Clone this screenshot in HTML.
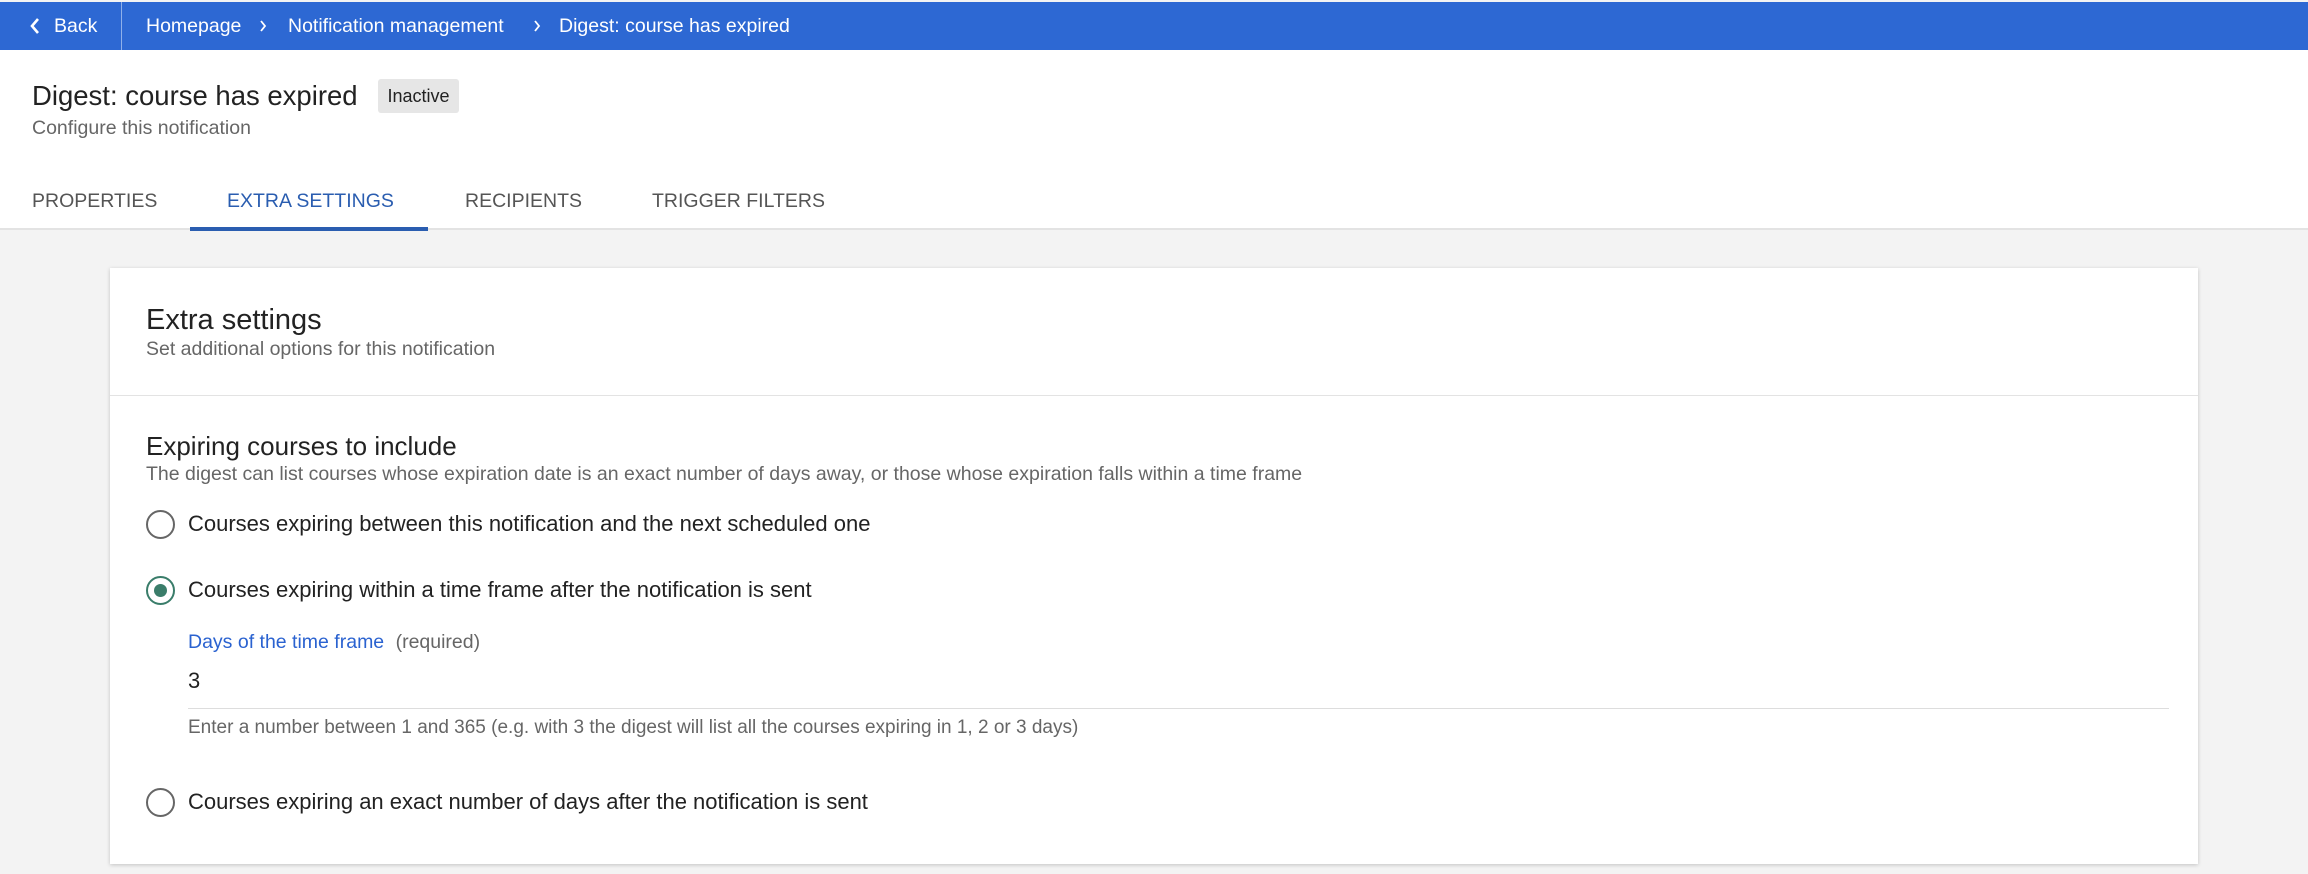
<!DOCTYPE html>
<html><head><meta charset="utf-8"><style>
*{margin:0;padding:0;box-sizing:border-box}
body{width:2308px;height:874px;background:#f3f3f3;font-family:"Liberation Sans",sans-serif;position:relative;overflow:hidden;color:#222}
.abs{position:absolute;white-space:nowrap;line-height:30px}
#bar{position:absolute;left:0;top:2px;width:2308px;height:48px;background:#2d68d3;color:#fff;font-size:19.5px}
#head{position:absolute;left:0;top:50px;width:2308px;height:180px;background:#fff;border-bottom:2px solid #e3e3e3}
.tab{position:absolute;top:186px;font-size:19.5px;color:#555;line-height:30px;white-space:nowrap}
#card{position:absolute;left:110px;top:268px;width:2088px;height:596px;background:#fff;box-shadow:0 1px 4px rgba(0,0,0,.2)}
.radio{position:absolute;width:29px;height:29px;border:2.5px solid #666;border-radius:50%}
.lbl{font-size:22px;color:#222}
</style></head><body>
<div id="bar">
 <svg class="abs" style="left:29px;top:15px" width="12" height="18" viewBox="0 0 12 18"><path d="M9 2 L3 9 L9 16" stroke="#fff" stroke-width="2.6" fill="none"/></svg>
 <div class="abs" style="left:54px;top:9px">Back</div>
 <div class="abs" style="left:121px;top:0;width:1px;height:48px;background:#8fb0ea"></div>
 <div class="abs" style="left:146px;top:9px">Homepage</div>
 <svg class="abs" style="left:259px;top:18px" width="8" height="12" viewBox="0 0 8 12"><path d="M2 1 L6 6 L2 11" stroke="#fff" stroke-width="1.8" fill="none"/></svg>
 <div class="abs" style="left:288px;top:9px">Notification management</div>
 <svg class="abs" style="left:533px;top:18px" width="8" height="12" viewBox="0 0 8 12"><path d="M2 1 L6 6 L2 11" stroke="#fff" stroke-width="1.8" fill="none"/></svg>
 <div class="abs" style="left:559px;top:9px">Digest: course has expired</div>
</div>
<div id="head"></div>
<div class="abs" style="left:32px;top:79px;font-size:27.5px;line-height:34px;color:#222">Digest: course has expired</div>
<div class="abs" style="left:378px;top:79px;width:81px;height:34px;background:#e6e6e6;border-radius:3px;font-size:18px;line-height:34px;text-align:center">Inactive</div>
<div class="abs" style="left:32px;top:113px;font-size:19.5px;color:#666">Configure this notification</div>
<div class="tab" style="left:32px">PROPERTIES</div>
<div class="tab" style="left:227px;color:#2a5db0">EXTRA SETTINGS</div>
<div class="abs" style="left:190px;top:227px;width:238px;height:4px;background:#2a5db0"></div>
<div class="tab" style="left:465px">RECIPIENTS</div>
<div class="tab" style="left:652px">TRIGGER FILTERS</div>

<div id="card">
 <div class="abs" style="left:36px;top:34px;font-size:29px;line-height:36px">Extra settings</div>
 <div class="abs" style="left:36px;top:66px;font-size:19.5px">
  <span style="color:#666">Set additional options for this notification</span></div>
 <div class="abs" style="left:0;top:127px;width:2088px;height:1px;background:#e3e3e3"></div>
 <div class="abs" style="left:36px;top:161px;font-size:26px;line-height:34px">Expiring courses to include</div>
 <div class="abs" style="left:36px;top:191px;font-size:19.5px;color:#666">The digest can list courses whose expiration date is an exact number of days away, or those whose expiration falls within a time frame</div>
 <div class="radio" style="left:36px;top:242px"></div>
 <div class="abs lbl" style="left:78px;top:241px">Courses expiring between this notification and the next scheduled one</div>
 <div class="radio" style="left:36px;top:308px;border-color:#3a7d6a"><div style="position:absolute;left:5.5px;top:5.5px;width:13px;height:13px;border-radius:50%;background:#3a7d6a"></div></div>
 <div class="abs lbl" style="left:78px;top:307px">Courses expiring within a time frame after the notification is sent</div>
 <div class="abs" style="left:78px;top:359px;font-size:19.5px;color:#2a62d0">Days of the time frame <span style="color:#666;margin-left:6px">(required)</span></div>
 <div class="abs" style="left:78px;top:398px;font-size:22px">3</div>
 <div class="abs" style="left:78px;top:440px;width:1981px;height:1px;background:#ddd"></div>
 <div class="abs" style="left:78px;top:445px;font-size:19px;color:#666">Enter a number between 1 and 365 (e.g. with 3 the digest will list all the courses expiring in 1, 2 or 3 days)</div>
 <div class="radio" style="left:36px;top:520px"></div>
 <div class="abs lbl" style="left:78px;top:519px">Courses expiring an exact number of days after the notification is sent</div>
</div>
</body></html>
